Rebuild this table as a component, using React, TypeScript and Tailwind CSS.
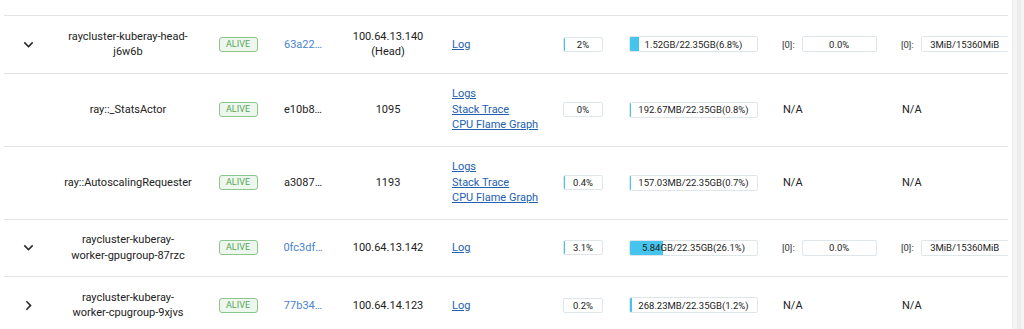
import React from "react";

const COLS =
  "grid grid-cols-[48px_152px_68px_62px_108px_111px_60px_159px_119px_117px] items-center border-b border-[#e3e3e3]";

function ChevronDown() {
  return (
    <svg width="19" height="19" viewBox="0 0 24 24" fill="#2b2b2b">
      <path d="M7.41 8.59 12 13.17l4.59-4.58L18 10l-6 6-6-6 1.41-1.41z" />
    </svg>
  );
}

function ChevronRight() {
  return (
    <svg width="19" height="19" viewBox="0 0 24 24" fill="#2b2b2b">
      <path d="M8.59 16.59 13.17 12 8.59 7.41 10 6l6 6-6 6-1.41-1.41z" />
    </svg>
  );
}

function Alive() {
  return (
    <span className="inline-flex h-[15px] w-[39px] items-center justify-center rounded-[3px] border border-[#8cc58e] bg-[#eef7ee] text-[9px] leading-none text-[#55a658]">
      ALIVE
    </span>
  );
}

function Bar({ pct, text, w, h = 15 }: { pct: number; text: string; w: number; h?: number }) {
  return (
    <div
      className="relative overflow-hidden rounded-[2px] border border-[#dfe6ea] bg-white"
      style={{ width: w, height: h }}
    >
      <div className="absolute inset-y-0 left-0 bg-[#45c4ee]" style={{ width: `${pct}%` }} />
      <div className="relative flex h-full items-center justify-center text-[9.5px] leading-none text-[#222]">
        {text}
      </div>
    </div>
  );
}

function Gpu({ text, w }: { text: string; w: number }) {
  return (
    <div className="flex items-center">
      <span className="text-[9.5px] text-[#333]">[0]:</span>
      <div className="ml-[7px]">
        <Bar pct={0} text={text} w={w} h={16} />
      </div>
    </div>
  );
}

const linkCls = "text-[#2460b0] underline underline-offset-[1px] decoration-[#2460b0]";

type Row = {
  icon: "down" | "right" | null;
  name: string[];
  id: string;
  idLink: boolean;
  ip: string[];
  links: string[];
  cpu: number;
  cpuText: string;
  mem: number;
  memText: string;
  gpu: boolean;
};

const rows: Row[] = [
  {
    icon: "down",
    name: ["raycluster-kuberay-head-", "j6w6b"],
    id: "63a22…",
    idLink: true,
    ip: ["100.64.13.140", "(Head)"],
    links: ["Log"],
    cpu: 2,
    cpuText: "2%",
    mem: 6.8,
    memText: "1.52GB/22.35GB(6.8%)",
    gpu: true,
  },
  {
    icon: null,
    name: ["ray::_StatsActor"],
    id: "e10b8…",
    idLink: false,
    ip: ["1095"],
    links: ["Logs", "Stack Trace", "CPU Flame Graph"],
    cpu: 0,
    cpuText: "0%",
    mem: 0.8,
    memText: "192.67MB/22.35GB(0.8%)",
    gpu: false,
  },
  {
    icon: null,
    name: ["ray::AutoscalingRequester"],
    id: "a3087…",
    idLink: false,
    ip: ["1193"],
    links: ["Logs", "Stack Trace", "CPU Flame Graph"],
    cpu: 0.4,
    cpuText: "0.4%",
    mem: 0.7,
    memText: "157.03MB/22.35GB(0.7%)",
    gpu: false,
  },
  {
    icon: "down",
    name: ["raycluster-kuberay-", "worker-gpugroup-87rzc"],
    id: "0fc3df…",
    idLink: true,
    ip: ["100.64.13.142"],
    links: ["Log"],
    cpu: 3.1,
    cpuText: "3.1%",
    mem: 26.1,
    memText: "5.84GB/22.35GB(26.1%)",
    gpu: true,
  },
  {
    icon: "right",
    name: ["raycluster-kuberay-", "worker-cpugroup-9xjvs"],
    id: "77b34…",
    idLink: true,
    ip: ["100.64.14.123"],
    links: ["Log"],
    cpu: 0.2,
    cpuText: "0.2%",
    mem: 1.2,
    memText: "268.23MB/22.35GB(1.2%)",
    gpu: false,
  },
];

export default function App() {
  return (
    <div
      className="flex h-[329px] w-[1024px] overflow-hidden bg-white text-[11px] leading-[15.5px] text-[#222]"
      style={{ fontFamily: "Roboto, 'Noto Sans', sans-serif" }}
    >
      <div className="ml-[4px] w-[1004px] shrink-0">
        <div className="h-[16px] border-b border-[#e3e3e3]" />
        {rows.map((r, i) => (
          <div key={i} className={COLS}>
            <div className="flex justify-center py-[12.75px]">
              {r.icon === "down" ? <ChevronDown /> : r.icon === "right" ? <ChevronRight /> : null}
            </div>
            <div className="py-[12.75px] text-center">
              {r.name.map((n) => (
                <div key={n}>{n}</div>
              ))}
            </div>
            <div className="flex justify-center py-[12.75px]">
              <Alive />
            </div>
            <div className={`py-[12.75px] text-center ${r.idLink ? "text-[#4a82cf]" : "text-[#222]"}`}>
              {r.id}
            </div>
            <div className="py-[12.75px] text-center">
              {r.ip.map((n) => (
                <div key={n}>{n}</div>
              ))}
            </div>
            <div className="py-[12.75px] pl-[10px]">
              {r.links.map((l) => (
                <div key={l}>
                  <span className={linkCls}>{l}</span>
                </div>
              ))}
            </div>
            <div className="py-[12.75px] pl-[10px]">
              <Bar pct={r.cpu} text={r.cpuText} w={40} />
            </div>
            <div className="py-[12.75px] pl-[16px]">
              <Bar pct={r.mem} text={r.memText} w={129} h={16} />
            </div>
            <div className="py-[12.75px] pl-[10px]">
              {r.gpu ? <Gpu text="0.0%" w={75} /> : <span className="pl-[1px]">N/A</span>}
            </div>
            <div className="overflow-hidden py-[12.75px] pl-[10px]">
              {r.gpu ? <Gpu text="3MiB/15360MiB" w={88} /> : <span className="pl-[1px]">N/A</span>}
            </div>
          </div>
        ))}
      </div>
      <div className="ml-[4px] flex h-full w-[12px] shrink-0 justify-center border-l border-[#ececec] bg-[#f4f4f4]">
        <div className="h-full w-[4px] bg-[#ececec]" />
      </div>
    </div>
  );
}
